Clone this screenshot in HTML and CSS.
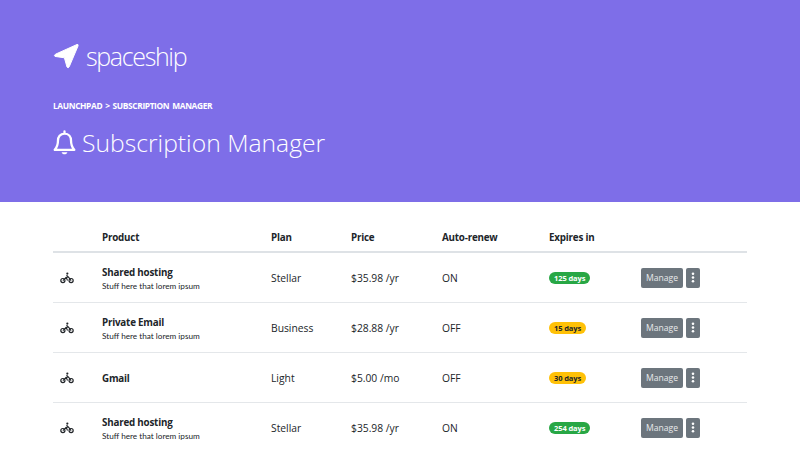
FILE: index.html
```html
<!DOCTYPE html>
<html lang="en">
  <head>
    <meta charset="UTF-8" />
    <title>Subscription Manager</title>
    <link rel="stylesheet" href="styles.css">
  </head>
  <body>
    <svg class="defs" width="0" height="0">
      <symbol id="bike" viewBox="0 0 16 14">
        <circle cx="3.2" cy="10" r="2.4" fill="none" stroke="currentColor" stroke-width="1.4" />
        <circle cx="12.8" cy="10" r="2.4" fill="none" stroke="currentColor" stroke-width="1.4" />
        <path d="M3.2 10 L7 6.2 L10 6.2 L12.8 10 M7 6.2 L8.6 10 M7.4 3.6 L10 6.2" fill="none" stroke="currentColor" stroke-width="1.3" />
        <circle cx="8.4" cy="1.8" r="1.3" fill="currentColor" />
      </symbol>
      <symbol id="dots" viewBox="0 0 4 12">
        <circle cx="2" cy="2" r="1.4" fill="currentColor" />
        <circle cx="2" cy="6" r="1.4" fill="currentColor" />
        <circle cx="2" cy="10" r="1.4" fill="currentColor" />
      </symbol>
    </svg>

    <header class="hero">
      <div class="logo">
        <svg class="logo-icon" viewBox="0 0 26 26">
          <path d="M24 1.5 L2.5 11.2 Q0.6 12.4 2 13.4 L11.4 14.8 L14 24 Q15.2 25.6 16.2 23.8 L25 3 Q25.5 1 24 1.5 Z" fill="#fff" stroke="#fff" stroke-linejoin="round" />
        </svg>
        <span class="logo-text">spaceship</span>
      </div>
      <div class="crumbs">LAUNCHPAD &gt; SUBSCRIPTION MANAGER</div>
      <h1 class="title">
        <svg class="bell" viewBox="0 0 24 26">
          <path d="M12 1 V3.2 M12 3.2 C7.4 3.2 5.2 6.8 5.2 10.5 C5.2 15.5 4.4 17.4 1.8 20.2 H22.2 C19.6 17.4 18.8 15.5 18.8 10.5 C18.8 6.8 16.6 3.2 12 3.2 Z" fill="none" stroke="#fff" stroke-width="2.4" stroke-linejoin="round" stroke-linecap="round" />
          <path d="M9 22.6 C9.6 25.4 14.4 25.4 15 22.6 Z" fill="#fff" />
        </svg>
        Subscription Manager
      </h1>
    </header>

    <main class="content">
      <table class="subs">
        <thead>
          <tr>
            <th class="c-icon"></th>
            <th class="c-product">Product</th>
            <th class="c-plan">Plan</th>
            <th class="c-price">Price</th>
            <th class="c-renew">Auto-renew</th>
            <th class="c-expires">Expires in</th>
            <th></th>
          </tr>
        </thead>
        <tbody>
          <tr>
            <td><svg class="bike"><use href="#bike" /></svg></td>
            <td><div class="name">Shared hosting</div><div class="sub">Stuff here that lorem ipsum</div></td>
            <td>Stellar</td>
            <td>$35.98 /yr</td>
            <td>ON</td>
            <td><span class="badge green">125 days</span></td>
            <td><div class="actions"><button class="btn">Manage</button><button class="btn more"><svg class="dots"><use href="#dots" /></svg></button></div></td>
          </tr>
          <tr>
            <td><svg class="bike"><use href="#bike" /></svg></td>
            <td><div class="name">Private Email</div><div class="sub">Stuff here that lorem ipsum</div></td>
            <td>Business</td>
            <td>$28.88 /yr</td>
            <td>OFF</td>
            <td><span class="badge yellow">15 days</span></td>
            <td><div class="actions"><button class="btn">Manage</button><button class="btn more"><svg class="dots"><use href="#dots" /></svg></button></div></td>
          </tr>
          <tr>
            <td><svg class="bike"><use href="#bike" /></svg></td>
            <td><div class="name">Gmail</div></td>
            <td>Light</td>
            <td>$5.00 /mo</td>
            <td>OFF</td>
            <td><span class="badge yellow">30 days</span></td>
            <td><div class="actions"><button class="btn">Manage</button><button class="btn more"><svg class="dots"><use href="#dots" /></svg></button></div></td>
          </tr>
          <tr>
            <td><svg class="bike"><use href="#bike" /></svg></td>
            <td><div class="name">Shared hosting</div><div class="sub">Stuff here that lorem ipsum</div></td>
            <td>Stellar</td>
            <td>$35.98 /yr</td>
            <td>ON</td>
            <td><span class="badge green">254 days</span></td>
            <td><div class="actions"><button class="btn">Manage</button><button class="btn more"><svg class="dots"><use href="#dots" /></svg></button></div></td>
          </tr>
        </tbody>
      </table>
    </main>
  </body>
</html>
```
FILE: styles.css
```css
html, body {
  height: 450px;
  overflow: hidden;
}
body {
  margin: 0;
  font-family: "Open Sans", "Noto Sans", sans-serif;
  font-size: 10.3px;
  color: #212529;
  background: #fff;
}
.defs {
  position: absolute;
}
.hero {
  height: 202px;
  box-sizing: border-box;
  padding: 40px 53px 0;
  background: #7e6ee8;
  color: #fff;
}
.logo {
  display: flex;
  align-items: center;
  height: 32px;
}
.logo-icon {
  width: 26px;
  height: 26px;
  margin-right: 7px;
}
.logo-text {
  font-size: 25px;
  font-weight: 300;
  line-height: 32px;
  letter-spacing: -1.35px;
}
.crumbs {
  margin-top: 27px;
  font-size: 8.4px;
  font-weight: 700;
  line-height: 14px;
  letter-spacing: -0.38px;
  word-spacing: 1.2px;
}
.title {
  display: flex;
  align-items: center;
  margin: 13px 0 0;
  font-size: 24.7px;
  font-weight: 300;
  line-height: 34px;
}
.bell {
  width: 23px;
  height: 26px;
  margin-right: 6px;
}
.content {
  padding: 0 53px;
}
.subs {
  width: 694px;
  table-layout: fixed;
  border-collapse: collapse;
}
.subs th {
  height: 50px;
  box-sizing: border-box;
  padding: 0 0 7px;
  font-size: 9.8px;
  font-weight: 700;
  letter-spacing: -0.2px;
  text-align: left;
  vertical-align: bottom;
  border-bottom: 2px solid #dee2e6;
}
.subs td {
  height: 50px;
  box-sizing: border-box;
  padding: 1px 0 0;
  border-bottom: 1px solid #e4e7ea;
}
.c-icon { width: 49px; }
.c-product { width: 169px; }
.c-plan { width: 80px; }
.c-price { width: 91px; }
.c-renew { width: 107px; }
.c-expires { width: 92px; }
.bike {
  display: block;
  width: 14px;
  height: 12px;
  margin-left: 7px;
  color: #212529;
}
.name {
  padding-top: 2px;
  font-size: 9.8px;
  font-weight: 700;
  line-height: 15px;
  letter-spacing: -0.2px;
}
.sub {
  font-family: Lato, "Open Sans", sans-serif;
  font-size: 8.2px;
  line-height: 12px;
}
.badge {
  display: inline-block;
  padding: 0 5px;
  border-radius: 6px;
  font-size: 7.5px;
  font-weight: 700;
  line-height: 12px;
  letter-spacing: -0.1px;
  vertical-align: 1px;
}
.green {
  background: #28a745;
  color: #fff;
}
.yellow {
  background: #ffc107;
  color: #212529;
}
.actions {
  display: flex;
  gap: 3px;
}
.btn {
  height: 20px;
  width: 42px;
  padding: 0;
  border: 0;
  border-radius: 2px;
  background: #6c757d;
  color: #e9eaec;
  font-family: inherit;
  font-size: 8.6px;
  line-height: 20px;
}
.more {
  display: flex;
  align-items: center;
  justify-content: center;
  width: 14px;
  color: #fff;
}
.dots {
  width: 4px;
  height: 11px;
}
```
